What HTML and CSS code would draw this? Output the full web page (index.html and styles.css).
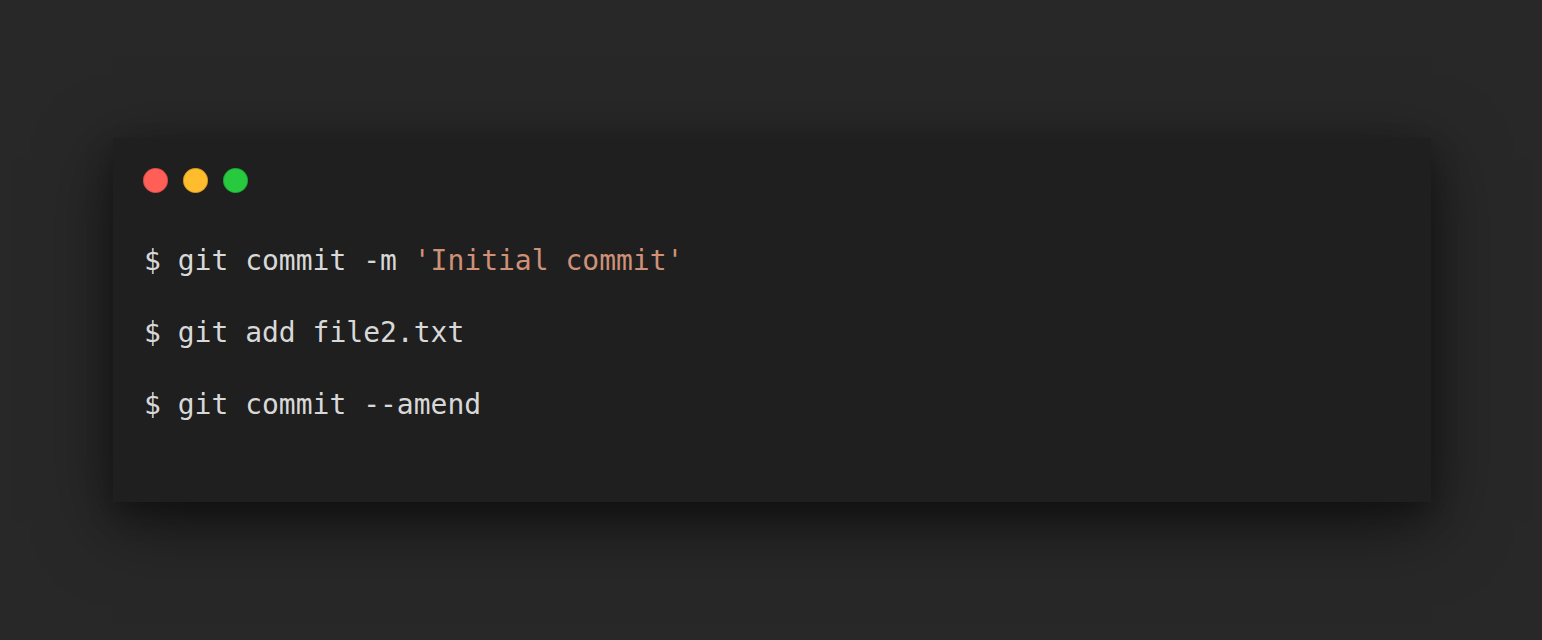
FILE: index.html
```html
<!DOCTYPE html>
<html>
<head>
<meta charset="utf-8">
<link rel="stylesheet" href="styles.css">
</head>
<body>
<main class="stage">
  <section class="window">
    <div class="controls">
      <span class="dot red"></span>
      <span class="dot yellow"></span>
      <span class="dot green"></span>
    </div>
    <div class="code">
      <div class="line">$ git commit -m <span class="str">'Initial commit'</span></div>
      <div class="line">$ git add file2.txt</div>
      <div class="line">$ git commit --amend</div>
    </div>
  </section>
</main>
</body>
</html>
```
FILE: styles.css
```css
html, body {
  margin: 0;
  padding: 0;
  height: 100%;
  background: #282828;
}
.stage {
  height: 640px;
  box-sizing: border-box;
  padding-left: 2px;
  display: flex;
  align-items: center;
  justify-content: center;
}
.window {
  width: 1318px;
  height: 364px;
  box-sizing: border-box;
  background: #1f1f1f;
  box-shadow: 0 20px 68px rgba(0, 0, 0, 0.55), 0 12px 24px rgba(0, 0, 0, 0.25);
  padding: 30px 30px 0 30px;
}
.controls {
  display: flex;
  gap: 15px;
  height: 25px;
}
.dot {
  width: 25px;
  height: 25px;
  border-radius: 50%;
  box-shadow: inset 0 0 0 1px rgba(0, 0, 0, 0.18);
}
.red { background: #ff5f56; }
.yellow { background: #ffbd2e; }
.green { background: #27c93f; }
.code {
  margin-top: 32px;
  padding-left: 1px;
  font-family: "DejaVu Sans Mono", monospace;
  font-size: 28px;
  line-height: 72px;
  color: #d8d8d8;
}
.line {
  white-space: pre;
}
.str {
  color: #ce9178;
}
```
